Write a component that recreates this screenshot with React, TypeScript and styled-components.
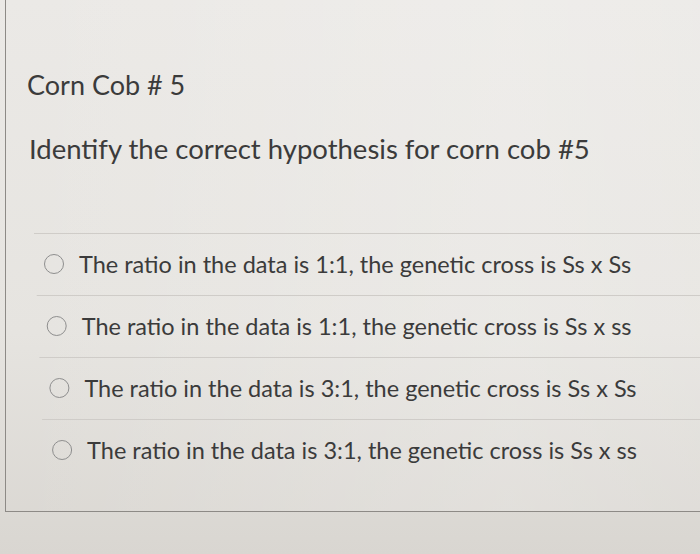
import React from "react"
import styled, { createGlobalStyle } from "styled-components"

const GlobalStyle = createGlobalStyle`
  html, body {
    margin: 0;
    padding: 0;
    height: 100%;
    overflow: hidden;
  }
  body {
    background: linear-gradient(180deg, #ebe9e6 0%, #e6e4e0 60%, #d9d6d1 100%);
    font-family: Lato, "Open Sans", "Liberation Sans", sans-serif;
    color: #3b3b3b;
  }
`

const Card = styled.div`
  border-bottom: 1px solid #8d8a86;
  border-left: 1px solid #8d8a86;
  box-sizing: border-box;
  margin-left: 5px;
  padding: 69px 0 30px 21px;
  width: 720px;
  background: linear-gradient(90deg, rgba(255, 255, 255, 0) 0%, rgba(255, 255, 255, 0.18) 70%, rgba(255, 255, 255, 0.1) 100%);
`

const Title = styled.div`
  font-size: 27px;
  line-height: 32px;
`

const Question = styled.div`
  font-size: 27.5px;
  line-height: 34px;
  margin-top: 31px;
  padding-left: 2px;
`

const OptionList = styled.div`
  display: flex;
  flex-direction: column;
  margin-top: 67px;
  margin-left: 7px;
`

const Option = styled.div<{ $shift: number }>`
  align-items: center;
  border-top: 1px solid #cfccc8;
  box-sizing: border-box;
  display: flex;
  font-size: 23.5px;
  gap: 15px;
  height: 62px;
  padding: 0 0 2px 10px;
  transform: translateX(${({ $shift }) => $shift}px);
`

const Radio = styled.span`
  border: 1.5px solid #8e8e8e;
  border-radius: 50%;
  box-sizing: border-box;
  flex: 0 0 auto;
  height: 20px;
  margin-top: 1px;
  width: 20px;
`

const options = [
  "The ratio in the data is 1:1, the genetic cross is Ss x Ss",
  "The ratio in the data is 1:1, the genetic cross is Ss x ss",
  "The ratio in the data is 3:1, the genetic cross is Ss x Ss",
  "The ratio in the data is 3:1, the genetic cross is Ss x ss",
]

const App = () => {
  return (
    <>
      <GlobalStyle />
      <Card>
        <Title>Corn Cob # 5</Title>
        <Question>Identify the correct hypothesis for corn cob #5</Question>
        <OptionList>
          {options.map((text, index) => (
            <Option key={index} $shift={index * 2.7}>
              <Radio />
              {text}
            </Option>
          ))}
        </OptionList>
      </Card>
    </>
  )
}

export default App
